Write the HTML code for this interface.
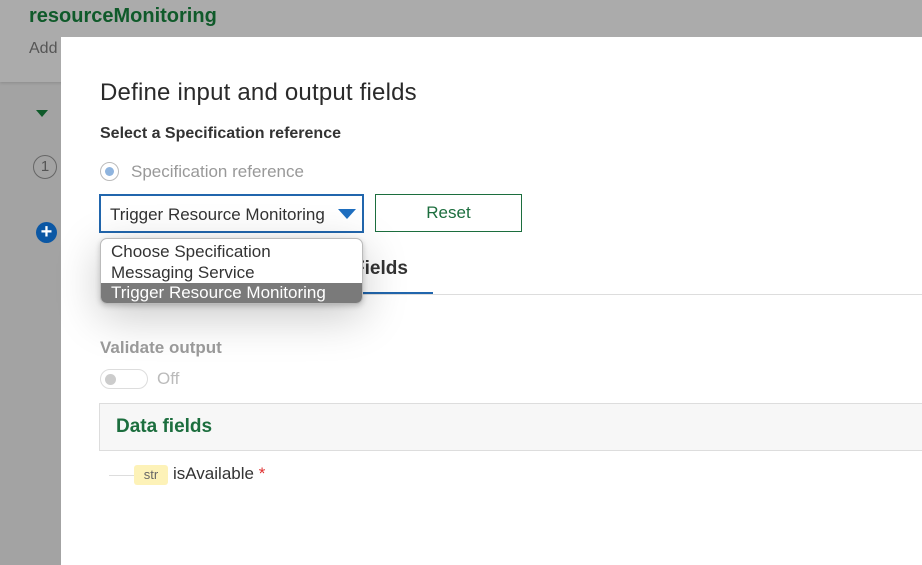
<!DOCTYPE html>
<html><head><style>
*{box-sizing:border-box;margin:0;padding:0}
body{width:922px;height:565px;overflow:hidden;background:#a3a3a3;font-family:"Liberation Sans",sans-serif;position:relative}
.hdr{position:absolute;left:0;top:0;width:922px;height:82px;background:#ababab;box-shadow:0 1px 3px rgba(0,0,0,.15)}
.title{position:absolute;left:29px;top:5px;font-size:20px;font-weight:bold;color:#0f5a2a}
.add{position:absolute;left:29px;top:40px;font-size:16px;color:#555}
.modal{position:absolute;left:61px;top:37px;width:861px;height:528px;background:#fff}
.abs{position:absolute}
</style></head><body>
<div class="hdr"></div>
<div class="title">resourceMonitoring</div>
<div class="add">Add</div>
<div class="abs" style="left:36px;top:110px;width:0;height:0;border-left:6px solid transparent;border-right:6px solid transparent;border-top:7px solid #0f5a2a"></div>
<div class="abs" style="left:33px;top:155px;width:24px;height:24px;border:1.5px solid #666;border-radius:50%;font-size:15px;color:#555;text-align:center;line-height:21px">1</div>
<div class="abs" style="left:36px;top:222px;width:21px;height:21px;background:#0b57a4;border-radius:50%;color:#fff;font-size:20px;font-weight:bold;text-align:center;line-height:20px">+</div>
<div class="modal">
 <div class="abs" style="left:39px;top:42px;font-size:24px;color:#2a2a2a;letter-spacing:.2px">Define input and output fields</div>
 <div class="abs" style="left:39px;top:88px;font-size:16px;color:#333;font-weight:bold">Select a Specification reference</div>
 <div class="abs" style="left:39px;top:125px;width:19px;height:19px;border:1px solid #bbb;border-radius:50%"><div style="margin:4px;width:9px;height:9px;border-radius:50%;background:#8fb4de"></div></div>
 <div class="abs" style="left:70px;top:125px;font-size:17px;color:#999">Specification reference</div>
 <div class="abs" style="left:38px;top:157px;width:265px;height:39px;border:2px solid #2166ad"></div>
 <div class="abs" style="left:49px;top:168px;font-size:17px;color:#333">Trigger Resource Monitoring</div>
 <div class="abs" style="left:277px;top:172px;width:0;height:0;border-left:9px solid transparent;border-right:9px solid transparent;border-top:10px solid #1f6fc0"></div>
 <div class="abs" style="left:314px;top:157px;width:147px;height:38px;border:1.5px solid #1c6e3e;color:#1c6e3e;font-size:17px;text-align:center;line-height:36px">Reset</div>
 <div class="abs" style="left:292px;top:221px;font-size:19px;color:#333;font-weight:bold">Fields</div>
 <div class="abs" style="left:40px;top:255px;width:332px;height:2px;background:#2166ad"></div>
 <div class="abs" style="left:40px;top:257px;width:821px;height:1px;background:#ddd"></div>
 <div class="abs" style="left:39px;top:201px;width:263px;height:66px;background:#fff;border:1px solid #bbb;border-radius:7px;overflow:hidden;box-shadow:0 12px 45px rgba(0,0,0,.22),0 2px 6px rgba(0,0,0,.2)">
  <div style="padding:2px 0 0 10px;font-size:17px;color:#333;line-height:21px">Choose Specification</div>
  <div style="padding:0 0 0 10px;font-size:17px;color:#333;line-height:21px">Messaging Service</div>
  <div style="background:#7a7a7a;color:#fff;padding:0 0 0 10px;font-size:17px;line-height:20px;height:21px">Trigger Resource Monitoring</div>
 </div>
 <div class="abs" style="left:39px;top:301px;font-size:17px;color:#999;font-weight:bold">Validate output</div>
 <div class="abs" style="left:39px;top:332px;width:48px;height:20px;border:1px solid #ddd;border-radius:10px"><div style="margin:4px 0 0 4px;width:11px;height:11px;border-radius:50%;background:#ccc"></div></div>
 <div class="abs" style="left:96px;top:332px;font-size:17px;color:#bbb">Off</div>
 <div class="abs" style="left:38px;top:366px;width:830px;height:48px;background:#f7f7f7;border:1px solid #ddd"></div>
 <div class="abs" style="left:55px;top:379px;font-size:19px;color:#1c6e3e;font-weight:bold">Data fields</div>
 <div class="abs" style="left:48px;top:438px;width:26px;height:1px;background:#ddd"></div>
 <div class="abs" style="left:73px;top:428px;width:34px;height:20px;background:#fdf2b8;border-radius:3px;color:#666;font-size:13px;text-align:center;line-height:20px">str</div>
 <div class="abs" style="left:112px;top:427px;font-size:17px;color:#333">isAvailable <span style="color:#e03030">*</span></div>
</div>
</body></html>
